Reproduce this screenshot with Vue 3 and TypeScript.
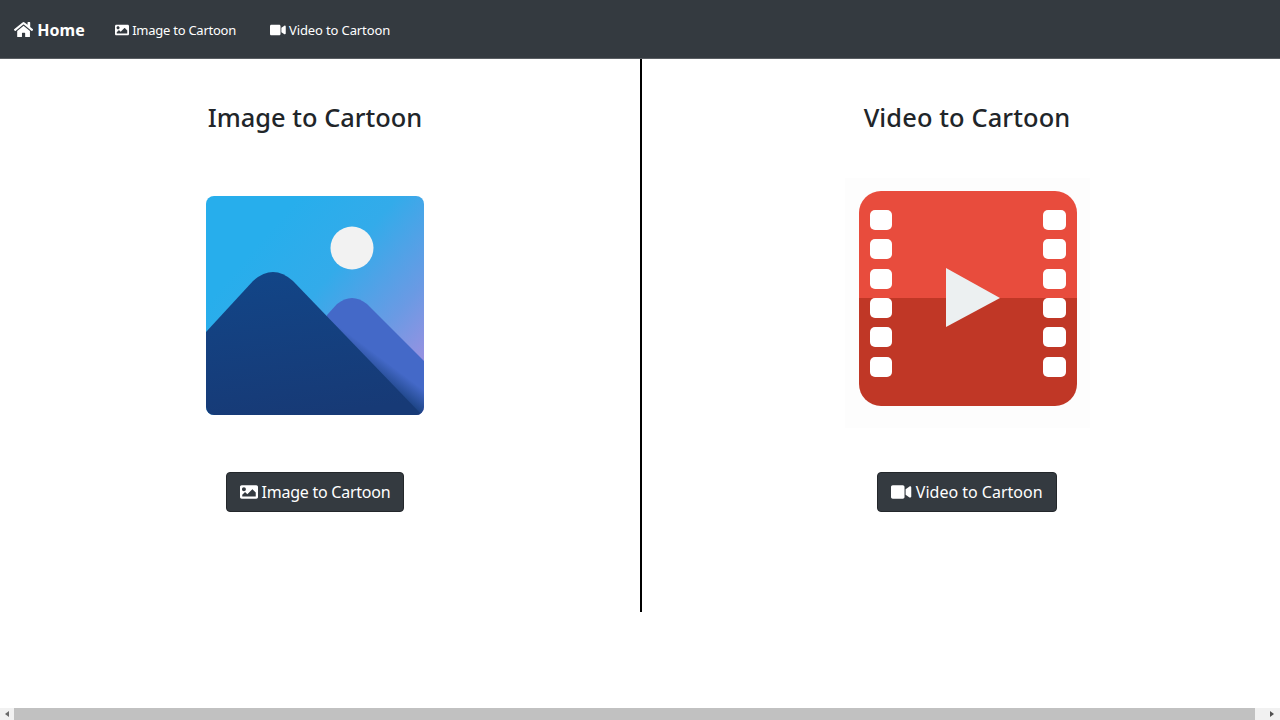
<template>
  <div class="page">
    <nav class="navbar">
      <a class="brand">
        <svg class="icon" viewBox="0 0 576 512"><path :d="icons.home" /></svg>
        Home
      </a>
      <a class="nav-link">
        <svg class="icon" viewBox="0 0 512 512"><path :d="icons.image" /></svg>
        Image to Cartoon
      </a>
      <a class="nav-link nav-link--video">
        <svg class="icon" viewBox="0 0 576 512"><path :d="icons.video" /></svg>
        Video to Cartoon
      </a>
    </nav>

    <main class="split">
      <section class="col col--left">
        <h2>Image to Cartoon</h2>
        <div class="pic pic--image">
          <svg width="218" height="219" viewBox="0 0 218 219">
            <defs>
              <linearGradient id="sky" x1="0.25" y1="0.2" x2="1" y2="0.85">
                <stop offset="0" stop-color="#27aeec" />
                <stop offset="0.35" stop-color="#33abea" />
                <stop offset="0.7" stop-color="#6a9ae4" />
                <stop offset="1" stop-color="#a58fe0" />
              </linearGradient>
              <linearGradient id="back" gradientUnits="userSpaceOnUse" x1="195" y1="202" x2="207" y2="186">
                <stop offset="0" stop-color="#1d4485" />
                <stop offset="1" stop-color="#4469c8" />
              </linearGradient>
              <linearGradient id="front" x1="0.3" y1="0" x2="0.5" y2="1">
                <stop offset="0" stop-color="#124587" />
                <stop offset="1" stop-color="#173a76" />
              </linearGradient>
              <clipPath id="tile"><rect width="218" height="219" rx="8" /></clipPath>
            </defs>
            <g clip-path="url(#tile)">
              <rect width="218" height="219" fill="url(#sky)" />
              <circle cx="146" cy="52" r="21.5" fill="#f2f2f2" />
              <path d="M105 219 L121 119 L131 108 Q146 96 161 108 L218 165 V219 Z" fill="url(#back)" />
              <path d="M0 136 L47 85 Q67 67 87 85 L216 219 H0 Z" fill="url(#front)" />
            </g>
          </svg>
        </div>
        <button class="btn">
          <svg class="icon" viewBox="0 0 512 512"><path :d="icons.image" /></svg>
          Image to Cartoon
        </button>
      </section>

      <section class="col col--right">
        <h2 class="title--video">Video to Cartoon</h2>
        <div class="pic pic--video">
          <svg width="218" height="215" viewBox="0 0 218 215">
            <defs>
              <clipPath id="reel"><rect width="218" height="215" rx="22" /></clipPath>
            </defs>
            <g clip-path="url(#reel)">
              <rect width="218" height="107" fill="#e84c3d" />
              <rect y="107" width="218" height="108" fill="#c03726" />
            </g>
            <g fill="#fff">
              <rect v-for="y in holes" :key="'l' + y" x="11" :y="y" width="22" height="20" rx="5" />
              <rect v-for="y in holes" :key="'r' + y" x="184" :y="y" width="23" height="20" rx="5" />
            </g>
            <path d="M87 77 L141 107 L87 136 Z" fill="#ecf0f1" />
          </svg>
        </div>
        <button class="btn btn--video">
          <svg class="icon" viewBox="0 0 576 512"><path :d="icons.video" /></svg>
          Video to Cartoon
        </button>
      </section>
    </main>

    <div class="scrollbar">
      <span class="arrow arrow--left"></span>
      <span class="thumb"></span>
      <span class="arrow arrow--right"></span>
    </div>
  </div>
</template>

<script setup lang="ts">
const holes: number[] = [19, 48, 78, 107, 136, 166];

// font awesome 5 solid glyphs
const icons = {
  home: "M280.37 148.26L96 300.11V464a16 16 0 0 0 16 16l112.06-.29a16 16 0 0 0 15.92-16V368a16 16 0 0 1 16-16h64a16 16 0 0 1 16 16v95.64a16 16 0 0 0 16 16.05L464 480a16 16 0 0 0 16-16V300L295.67 148.26a12.19 12.19 0 0 0-15.3 0zM571.6 251.47L488 182.56V44.05a12 12 0 0 0-12-12h-56a12 12 0 0 0-12 12v72.61L318.47 43a48 48 0 0 0-61 0L4.34 251.47a12 12 0 0 0-1.6 16.9l25.5 31A12 12 0 0 0 45.15 301l235.22-193.74a12.19 12.19 0 0 1 15.3 0L530.9 301a12 12 0 0 0 16.9-1.6l25.5-31a12 12 0 0 0-1.7-16.93z",
  image: "M464 448H48c-26.51 0-48-21.49-48-48V112c0-26.51 21.49-48 48-48h416c26.51 0 48 21.49 48 48v288c0 26.51-21.49 48-48 48zM112 120c-30.928 0-56 25.072-56 56s25.072 56 56 56 56-25.072 56-56-25.072-56-56-56zM64 384h384V272l-87.515-87.515c-4.686-4.686-12.284-4.686-16.971 0L208 320l-55.515-55.515c-4.686-4.686-12.284-4.686-16.971 0L64 336v48z",
  video: "M336.2 64H47.8C21.4 64 0 85.4 0 111.8v288.4C0 426.6 21.4 448 47.8 448h288.4c26.4 0 47.8-21.4 47.8-47.8V111.8c0-26.4-21.4-47.8-47.8-47.8zm189.4 37.7L416 177.3v157.4l109.6 75.5c21.2 14.6 50.4-.3 50.4-25.8V127.5c0-25.4-29.1-40.4-50.4-25.8z",
};
</script>

<style>
body {
  overflow: hidden;
}
</style>

<style scoped>
.page {
  display: flex;
  flex-direction: column;
  width: 1280px;
  height: 720px;
  overflow: hidden;
  background: #fff;
  color: #212529;
  font-family: "Noto Sans", "Open Sans", sans-serif;
}

.navbar {
  display: flex;
  align-items: center;
  flex: none;
  height: 59px;
  padding: 1px 14px 0;
  background: #343a40;
  border-bottom: 1px solid #5a5e63;
  box-sizing: border-box;
  color: #fff;
}

.icon {
  fill: currentColor;
  height: 1em;
  vertical-align: -0.125em;
}

.brand {
  width: 101px;
  font-size: 16px;
  font-weight: 700;
  white-space: nowrap;
}

.brand .icon {
  height: 17px;
  vertical-align: -2px;
}

.nav-link {
  width: 155px;
  font-size: 13px;
  letter-spacing: -0.25px;
  white-space: nowrap;
}

.nav-link--video {
  letter-spacing: -0.12px;
}

.nav-link .icon {
  height: 14px;
  vertical-align: -2px;
}

.split {
  display: flex;
  flex: none;
  height: 553px;
}

.col {
  display: flex;
  flex-direction: column;
  align-items: center;
  flex: none;
  box-sizing: border-box;
}

.col--left {
  width: 642px;
  padding-right: 10px;
  border-right: 2px solid #000;
}

.col--right {
  width: 650px;
}

h2 {
  margin: 40px 0 0;
  font-size: 25.4px;
  font-weight: 500;
  line-height: 36px;
}

.title--video {
  letter-spacing: 0.12px;
}

.pic {
  display: flex;
  justify-content: center;
  height: 250px;
  margin-top: 43px;
  margin-bottom: 44px;
}

.pic--image {
  box-sizing: border-box;
  padding-top: 18px;
}

.pic--video {
  box-sizing: border-box;
  width: 245px;
  padding-top: 13px;
  padding-left: 2px;
  background: #fdfdfd;
}

.btn {
  height: 40px;
  padding: 0 13px;
  border: 1px solid #23272b;
  border-radius: 4px;
  background: #343a40;
  color: #fff;
  font-family: inherit;
  font-size: 16px;
  letter-spacing: -0.25px;
  white-space: nowrap;
}

.btn--video {
  letter-spacing: 0;
}

.btn .icon {
  height: 18px;
  vertical-align: -3px;
}

.scrollbar {
  display: flex;
  align-items: stretch;
  flex: none;
  height: 12px;
  margin-top: auto;
  background: #f1f1f1;
}

.thumb {
  flex: none;
  width: 1241px;
  background: #c1c1c1;
}

.arrow {
  position: relative;
}

.arrow--left {
  flex: none;
  width: 14px;
}

.arrow--right {
  flex: 1;
}

.arrow::after {
  content: "";
  position: absolute;
  top: 3px;
  border: 3px solid transparent;
}

.arrow--left::after {
  left: 5px;
  border-right: 4px solid #6b6b6b;
  border-left: 0;
}

.arrow--right::after {
  right: 6px;
  border-left: 4px solid #505050;
  border-right: 0;
}
</style>
